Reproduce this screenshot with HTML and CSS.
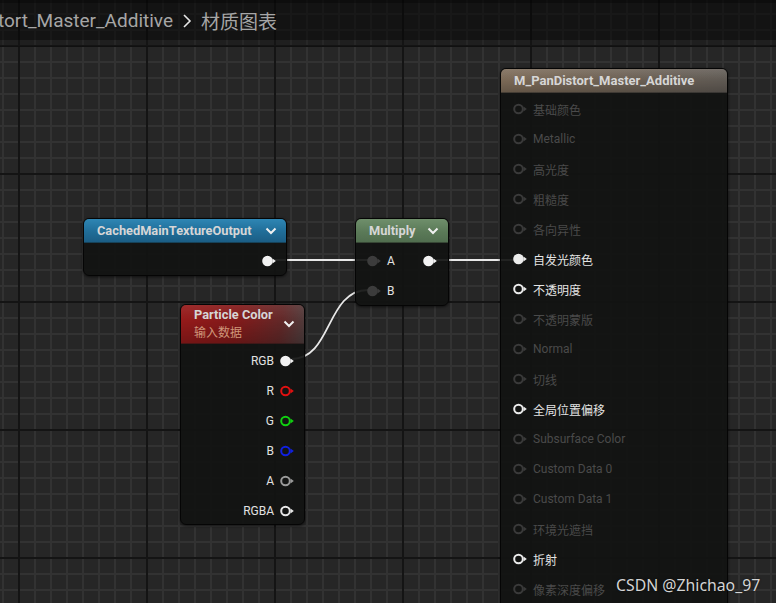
FILE: index.html
```html
<!DOCTYPE html>
<html>
<head>
<meta charset="utf-8">
<link rel="stylesheet" href="styles.css">
</head>
<body>
<div class="graph">
  <div class="topbar">
    <div class="crumbs">
      <span class="crumb-asset">tort_Master_Additive</span>
      <svg class="crumb-sep" width="10" height="16" viewBox="0 0 10 16"><polyline points="2,2 8,8 2,14" fill="none" stroke="#e6e6e6" stroke-width="1.6"/></svg>
      <span class="crumb-graph">材质图表</span>
    </div>
  </div>
  <div class="topband"></div>

  <svg class="wires" width="776" height="603" viewBox="0 0 776 603">
    <line x1="274" y1="260" x2="368" y2="260" stroke="#e8e8e8" stroke-width="2"/>
    <line x1="436" y1="260" x2="514" y2="260" stroke="#e8e8e8" stroke-width="2"/>
    <path d="M292,359 C332,359 326,290 368,290" fill="none" stroke="#e8e8e8" stroke-width="1.8"/>
  </svg>

  <div class="node node-cached">
    <div class="node-head head-blue">
      <span class="head-title">CachedMainTextureOutput</span>
      <svg class="chev" width="12" height="8" viewBox="0 0 12 8"><polyline points="1.5,1.5 6,6 10.5,1.5" fill="none" stroke="#f0f0f0" stroke-width="2"/></svg>
    </div>
    <div class="node-body body-cached">
      <div class="pin-row out">
        <svg class="pin" width="14" height="12" viewBox="0 0 14 12"><circle cx="5.5" cy="6" r="5.3" fill="#f2f2f2"/><polygon points="10.5,3.5 13.8,6 10.5,8.5" fill="#f2f2f2"/></svg>
      </div>
    </div>
  </div>

  <div class="node node-mul">
    <div class="node-head head-green">
      <span class="head-title">Multiply</span>
      <svg class="chev" width="12" height="8" viewBox="0 0 12 8"><polyline points="1.5,1.5 6,6 10.5,1.5" fill="none" stroke="#f0f0f0" stroke-width="2"/></svg>
    </div>
    <div class="node-body body-mul">
      <div class="mul-rows">
        <div class="mul-col">
          <div class="pin-row in">
            <svg class="pin" width="14" height="12" viewBox="0 0 14 12"><circle cx="5.5" cy="6" r="5.3" fill="#3c3c3c"/><polygon points="10.5,3.5 13.8,6 10.5,8.5" fill="#3c3c3c"/></svg>
            <span class="pin-label lit">A</span>
          </div>
          <div class="pin-row in">
            <svg class="pin" width="14" height="12" viewBox="0 0 14 12"><circle cx="5.5" cy="6" r="5.3" fill="#3c3c3c"/><polygon points="10.5,3.5 13.8,6 10.5,8.5" fill="#3c3c3c"/></svg>
            <span class="pin-label lit">B</span>
          </div>
        </div>
        <div class="pin-row out">
          <svg class="pin" width="14" height="12" viewBox="0 0 14 12"><circle cx="5.5" cy="6" r="5.3" fill="#f2f2f2"/><polygon points="10.5,3.5 13.8,6 10.5,8.5" fill="#f2f2f2"/></svg>
        </div>
      </div>
    </div>
  </div>

  <div class="node node-particle">
    <div class="node-head head-red">
      <div class="head-stack">
        <span class="head-title">Particle Color</span>
        <span class="head-sub">输入数据</span>
      </div>
      <svg class="chev" width="12" height="8" viewBox="0 0 12 8"><polyline points="1.5,1.5 6,6 10.5,1.5" fill="none" stroke="#f0f0f0" stroke-width="2"/></svg>
    </div>
    <div class="node-body body-particle">
      <div class="pin-row out">
        <span class="pin-label lit">RGB</span>
        <svg class="pin" width="14" height="12" viewBox="0 0 14 12"><circle cx="5.5" cy="6" r="5.3" fill="#f2f2f2"/><polygon points="10.5,3.5 13.8,6 10.5,8.5" fill="#f2f2f2"/></svg>
      </div>
      <div class="pin-row out">
        <span class="pin-label lit">R</span>
        <svg class="pin" width="14" height="12" viewBox="0 0 14 12"><circle cx="5.5" cy="6" r="4.3" fill="none" stroke="#e01010" stroke-width="2"/><polygon points="10.5,3.5 13.8,6 10.5,8.5" fill="#e01010"/></svg>
      </div>
      <div class="pin-row out">
        <span class="pin-label lit">G</span>
        <svg class="pin" width="14" height="12" viewBox="0 0 14 12"><circle cx="5.5" cy="6" r="4.3" fill="none" stroke="#10d010" stroke-width="2"/><polygon points="10.5,3.5 13.8,6 10.5,8.5" fill="#10d010"/></svg>
      </div>
      <div class="pin-row out">
        <span class="pin-label lit">B</span>
        <svg class="pin" width="14" height="12" viewBox="0 0 14 12"><circle cx="5.5" cy="6" r="4.3" fill="none" stroke="#1020e0" stroke-width="2"/><polygon points="10.5,3.5 13.8,6 10.5,8.5" fill="#1020e0"/></svg>
      </div>
      <div class="pin-row out">
        <span class="pin-label lit">A</span>
        <svg class="pin" width="14" height="12" viewBox="0 0 14 12"><circle cx="5.5" cy="6" r="4.3" fill="none" stroke="#9a9a9a" stroke-width="2"/><polygon points="10.5,3.5 13.8,6 10.5,8.5" fill="#9a9a9a"/></svg>
      </div>
      <div class="pin-row out">
        <span class="pin-label lit">RGBA</span>
        <svg class="pin" width="14" height="12" viewBox="0 0 14 12"><circle cx="5.5" cy="6" r="4.3" fill="none" stroke="#e6e6e6" stroke-width="2"/><polygon points="10.5,3.5 13.8,6 10.5,8.5" fill="#e6e6e6"/></svg>
      </div>
    </div>
  </div>

  <div class="node node-master">
    <div class="node-head head-brown">
      <span class="head-title">M_PanDistort_Master_Additive</span>
    </div>
    <div class="node-body body-master">
      <div class="pin-row in dim"><svg class="pin" width="14" height="12" viewBox="0 0 14 12"><circle cx="5.5" cy="6" r="4.3" fill="none" stroke="currentColor" stroke-width="2"/><polygon points="10.5,3.5 13.8,6 10.5,8.5" fill="currentColor"/></svg><span class="pin-label">基础颜色</span></div>
      <div class="pin-row in dim"><svg class="pin" width="14" height="12" viewBox="0 0 14 12"><circle cx="5.5" cy="6" r="4.3" fill="none" stroke="currentColor" stroke-width="2"/><polygon points="10.5,3.5 13.8,6 10.5,8.5" fill="currentColor"/></svg><span class="pin-label">Metallic</span></div>
      <div class="pin-row in dim"><svg class="pin" width="14" height="12" viewBox="0 0 14 12"><circle cx="5.5" cy="6" r="4.3" fill="none" stroke="currentColor" stroke-width="2"/><polygon points="10.5,3.5 13.8,6 10.5,8.5" fill="currentColor"/></svg><span class="pin-label">高光度</span></div>
      <div class="pin-row in dim"><svg class="pin" width="14" height="12" viewBox="0 0 14 12"><circle cx="5.5" cy="6" r="4.3" fill="none" stroke="currentColor" stroke-width="2"/><polygon points="10.5,3.5 13.8,6 10.5,8.5" fill="currentColor"/></svg><span class="pin-label">粗糙度</span></div>
      <div class="pin-row in dim"><svg class="pin" width="14" height="12" viewBox="0 0 14 12"><circle cx="5.5" cy="6" r="4.3" fill="none" stroke="currentColor" stroke-width="2"/><polygon points="10.5,3.5 13.8,6 10.5,8.5" fill="currentColor"/></svg><span class="pin-label">各向异性</span></div>
      <div class="pin-row in lit-row"><svg class="pin" width="14" height="12" viewBox="0 0 14 12"><circle cx="5.5" cy="6" r="5.3" fill="currentColor"/><polygon points="10.5,3.5 13.8,6 10.5,8.5" fill="currentColor"/></svg><span class="pin-label">自发光颜色</span></div>
      <div class="pin-row in lit-row"><svg class="pin" width="14" height="12" viewBox="0 0 14 12"><circle cx="5.5" cy="6" r="4.3" fill="none" stroke="currentColor" stroke-width="2"/><polygon points="10.5,3.5 13.8,6 10.5,8.5" fill="currentColor"/></svg><span class="pin-label">不透明度</span></div>
      <div class="pin-row in dim"><svg class="pin" width="14" height="12" viewBox="0 0 14 12"><circle cx="5.5" cy="6" r="4.3" fill="none" stroke="currentColor" stroke-width="2"/><polygon points="10.5,3.5 13.8,6 10.5,8.5" fill="currentColor"/></svg><span class="pin-label">不透明蒙版</span></div>
      <div class="pin-row in dim"><svg class="pin" width="14" height="12" viewBox="0 0 14 12"><circle cx="5.5" cy="6" r="4.3" fill="none" stroke="currentColor" stroke-width="2"/><polygon points="10.5,3.5 13.8,6 10.5,8.5" fill="currentColor"/></svg><span class="pin-label">Normal</span></div>
      <div class="pin-row in dim"><svg class="pin" width="14" height="12" viewBox="0 0 14 12"><circle cx="5.5" cy="6" r="4.3" fill="none" stroke="currentColor" stroke-width="2"/><polygon points="10.5,3.5 13.8,6 10.5,8.5" fill="currentColor"/></svg><span class="pin-label">切线</span></div>
      <div class="pin-row in lit-row"><svg class="pin" width="14" height="12" viewBox="0 0 14 12"><circle cx="5.5" cy="6" r="4.3" fill="none" stroke="currentColor" stroke-width="2"/><polygon points="10.5,3.5 13.8,6 10.5,8.5" fill="currentColor"/></svg><span class="pin-label">全局位置偏移</span></div>
      <div class="pin-row in dim"><svg class="pin" width="14" height="12" viewBox="0 0 14 12"><circle cx="5.5" cy="6" r="4.3" fill="none" stroke="currentColor" stroke-width="2"/><polygon points="10.5,3.5 13.8,6 10.5,8.5" fill="currentColor"/></svg><span class="pin-label">Subsurface Color</span></div>
      <div class="pin-row in dim"><svg class="pin" width="14" height="12" viewBox="0 0 14 12"><circle cx="5.5" cy="6" r="4.3" fill="none" stroke="currentColor" stroke-width="2"/><polygon points="10.5,3.5 13.8,6 10.5,8.5" fill="currentColor"/></svg><span class="pin-label">Custom Data 0</span></div>
      <div class="pin-row in dim"><svg class="pin" width="14" height="12" viewBox="0 0 14 12"><circle cx="5.5" cy="6" r="4.3" fill="none" stroke="currentColor" stroke-width="2"/><polygon points="10.5,3.5 13.8,6 10.5,8.5" fill="currentColor"/></svg><span class="pin-label">Custom Data 1</span></div>
      <div class="pin-row in dim"><svg class="pin" width="14" height="12" viewBox="0 0 14 12"><circle cx="5.5" cy="6" r="4.3" fill="none" stroke="currentColor" stroke-width="2"/><polygon points="10.5,3.5 13.8,6 10.5,8.5" fill="currentColor"/></svg><span class="pin-label">环境光遮挡</span></div>
      <div class="pin-row in lit-row"><svg class="pin" width="14" height="12" viewBox="0 0 14 12"><circle cx="5.5" cy="6" r="4.3" fill="none" stroke="currentColor" stroke-width="2"/><polygon points="10.5,3.5 13.8,6 10.5,8.5" fill="currentColor"/></svg><span class="pin-label">折射</span></div>
      <div class="pin-row in dim"><svg class="pin" width="14" height="12" viewBox="0 0 14 12"><circle cx="5.5" cy="6" r="4.3" fill="none" stroke="currentColor" stroke-width="2"/><polygon points="10.5,3.5 13.8,6 10.5,8.5" fill="currentColor"/></svg><span class="pin-label">像素深度偏移</span></div>
    </div>
  </div>

  <div class="watermark">CSDN @Zhichao_97</div>
</div>
</body>
</html>
```

FILE: styles.css
```css
* { box-sizing: border-box; }
html, body { margin: 0; padding: 0; background: #262626; }
body { font-family: "Roboto", "Noto Sans CJK SC", sans-serif; }

.graph {
  position: relative;
  width: 776px;
  height: 603px;
  overflow: hidden;
  background-color: #262626;
  background-image:
    linear-gradient(90deg, #141414 2px, transparent 2px),
    linear-gradient(0deg, #141414 2px, transparent 2px),
    linear-gradient(90deg, #323232 2px, transparent 2px),
    linear-gradient(0deg, #323232 2px, transparent 2px);
  background-size: 128px 128px, 128px 128px, 16px 16px, 16px 16px;
  background-position: 18px 0, 0 47px, 2px 0, 0 15px;
}

.topbar {
  position: absolute;
  left: 0; top: 0;
  width: 776px; height: 40px;
  background: rgba(8, 8, 8, 0.62);
  border-top: 3px solid rgba(0,0,0,0.3);
  display: flex;
  align-items: center;
}
.topband {
  position: absolute;
  left: 0; top: 40px;
  width: 776px; height: 7px;
  background: rgba(20, 20, 20, 0.35);
  border-bottom: 1px solid #101010;
}
.crumbs {
  display: flex;
  align-items: center;
  gap: 9px;
  margin-left: -2px;
  margin-top: -2px;
  font-size: 19px;
  color: #a6a6a6;
}
.crumb-sep { flex: none; }
.crumb-graph { font-family: "Noto Sans CJK SC", sans-serif; font-size: 19px; }

.wires { position: absolute; left: 0; top: 0; }

.node {
  position: absolute;
  border-radius: 6px;
  border: 1px solid #050505;
  background: rgba(18, 19, 18, 0.93);
  box-shadow: 0 1px 3px rgba(0,0,0,0.6);
  overflow: hidden;
}
.node-cached { left: 83px; top: 218px; width: 204px; height: 58px; }
.node-mul { left: 355px; top: 218px; width: 94px; height: 88px; }
.node-particle { left: 180px; top: 304px; width: 125px; height: 221px; }
.node-master { left: 500px; top: 68px; width: 228px; height: 560px; }

.node-head {
  height: 24px;
  display: flex;
  align-items: center;
  justify-content: space-between;
  padding: 0 9px 0 13px;
  border-bottom: 1px solid rgba(0,0,0,0.5);
}
.head-title {
  font-weight: 700;
  font-size: 12.8px;
  color: #d6d6d6;
  white-space: nowrap;
}
.node-master .head-title { font-size: 13px; }
.head-blue { background: linear-gradient(180deg, #2e86b4 0%, #206d98 55%, #1b5e85 100%); }
.head-green { background: linear-gradient(180deg, #6f8f6b 0%, #5b7a58 55%, #516e4f 100%); }
.head-red {
  height: 39px;
  align-items: center;
  background:
    linear-gradient(180deg, rgba(255,255,255,0.08) 0%, rgba(0,0,0,0) 40%, rgba(0,0,0,0.2) 100%),
    linear-gradient(100deg, #961a1a 0%, #821a1a 45%, #622828 80%, #4e3e3e 100%);
}
.head-brown {
  height: 24px;
  background:
    linear-gradient(180deg, rgba(255,255,255,0.12) 0%, rgba(0,0,0,0) 45%, rgba(0,0,0,0.18) 100%),
    linear-gradient(90deg, #7c6a57 0%, #6e6255 50%, #605a54 100%);
}
.head-stack { display: flex; flex-direction: column; line-height: 16px; margin-top: -2px; }
.head-sub {
  font-family: "Noto Sans CJK SC", sans-serif;
  font-size: 12px;
  color: #d0967a;
  line-height: 14px;
  margin-top: 2px;
}
.chev { flex: none; }

.node-body { display: flex; flex-direction: column; }
.body-cached { padding: 3px 10px 0 0; }
.body-mul { padding: 3px 0 0 0; }
.body-particle { padding: 2px 10px 0 0; }
.body-master { padding: 1px 0 0 12px; }

.mul-rows { display: flex; justify-content: space-between; align-items: flex-start; }
.mul-col { display: flex; flex-direction: column; padding-left: 11px; }
.mul-rows > .pin-row.out { padding-right: 11px; }

.pin-row {
  height: 30px;
  display: flex;
  align-items: center;
  gap: 6px;
}
.pin-row.out { justify-content: flex-end; }
.pin { flex: none; }
.pin-label {
  font-size: 12px;
  white-space: nowrap;
}
.lit { color: #e2e2e2; }
.pin-row.dim { color: #3a3a3a; }
.pin-row.dim .pin-label { color: #4a4a4a; }
.pin-row.lit-row { color: #ececec; }
.pin-row.lit-row .pin-label { color: #e4e4e4; }

.watermark {
  position: absolute;
  left: 616px;
  top: 574px;
  font-family: "Noto Sans", sans-serif;
  font-size: 15.8px;
  color: #d4d4d4;
  text-shadow: 0 0 2px rgba(0,0,0,0.6);
  white-space: nowrap;
}
```
